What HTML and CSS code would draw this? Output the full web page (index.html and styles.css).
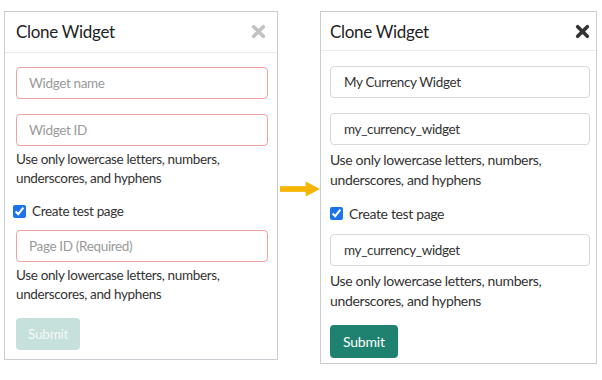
FILE: index.html
```html
<!DOCTYPE html>
<html lang="en">
<head>
  <meta charset="UTF-8">
  <meta name="viewport" content="width=device-width, initial-scale=1.0">
  <title>Clone Widget</title>
  <link rel="stylesheet" href="styles.css">
</head>
<body>

  <div class="escena">

    <!-- Antes: formulario vacío -->
    <div class="panel antes">
      <div class="cabecera">
        <span class="titulo">Clone Widget</span>
        <svg class="cerrar" viewBox="0 0 14 14"><path d="M2.5 2.5 L11.5 11.5 M11.5 2.5 L2.5 11.5"/></svg>
      </div>
      <div class="cuerpo">
        <input class="campo error" type="text" placeholder="Widget name">
        <input class="campo error" type="text" placeholder="Widget ID">
        <p class="ayuda">Use only lowercase letters, numbers, underscores, and hyphens</p>
        <label class="check"><input type="checkbox" checked> Create test page</label>
        <input class="campo error" type="text" placeholder="Page ID (Required)">
        <p class="ayuda">Use only lowercase letters, numbers, underscores, and hyphens</p>
        <button class="enviar" disabled>Submit</button>
      </div>
    </div>

    <!-- Flecha -->
    <div class="flecha">
      <svg viewBox="0 0 42 16"><rect x="0" y="5" width="28" height="6"/><polygon points="27,0 42,8 27,16"/></svg>
    </div>

    <!-- Después: formulario relleno -->
    <div class="panel despues">
      <div class="cabecera">
        <span class="titulo">Clone Widget</span>
        <svg class="cerrar" viewBox="0 0 14 14"><path d="M2.5 2.5 L11.5 11.5 M11.5 2.5 L2.5 11.5"/></svg>
      </div>
      <div class="cuerpo">
        <input class="campo" type="text" value="My Currency Widget">
        <input class="campo" type="text" value="my_currency_widget">
        <p class="ayuda">Use only lowercase letters, numbers, underscores, and hyphens</p>
        <label class="check"><input type="checkbox" checked> Create test page</label>
        <input class="campo" type="text" value="my_currency_widget">
        <p class="ayuda">Use only lowercase letters, numbers, underscores, and hyphens</p>
        <button class="enviar">Submit</button>
      </div>
    </div>

  </div>

</body>
</html>
```

FILE: styles.css
```css
/* Estilos generales */
body, html {
  margin: 0;
  padding: 0;
  background-color: #ffffff;
  font-family: Lato, "Open Sans", sans-serif;
  color: #333333;
  letter-spacing: -0.35px;
}

.escena {
  display: flex;
  align-items: flex-start;
  padding: 11px 0 0 4px;
}

/* Panel del modal */
.panel {
  box-sizing: border-box;
  border: 1px solid #c8cdd3;
  background-color: #ffffff;
}

.antes {
  width: 274px;
  height: 349px;
}

.despues {
  width: 277px;
  height: 353px;
}

.cabecera {
  display: flex;
  justify-content: space-between;
  align-items: center;
  border-bottom: 1px solid #e9ecef;
  padding: 0 11px 0 11px;
}

.antes .cabecera {
  height: 38px;
  padding-bottom: 2px;
}

.despues .cabecera {
  height: 38px;
  padding-left: 9px;
  padding-right: 6px;
}

.titulo {
  font-size: 17px;
  letter-spacing: -0.3px;
  color: #222222;
}

.cerrar {
  width: 15px;
  height: 15px;
  fill: none;
  stroke-width: 3.4;
  stroke-linecap: round;
}

.antes .cerrar {
  stroke: #c2c2c2;
}

.despues .cerrar {
  stroke: #333333;
}

.cuerpo {
  display: flex;
  flex-direction: column;
  align-items: flex-start;
  padding: 14px 9px 0 11px;
}

.despues .cuerpo {
  padding: 15px 6px 0 9px;
}

/* Campos de texto */
.campo {
  box-sizing: border-box;
  width: 100%;
  height: 32px;
  margin: 0 0 15px 0;
  padding: 0 12px;
  border: 1px solid #d6d9dc;
  border-radius: 4px;
  font-family: inherit;
  font-size: 13.5px;
  letter-spacing: -0.35px;
  color: #333333;
  outline: none;
}

.despues .campo {
  padding: 0 13px;
}

.campo.error {
  border: 1.5px solid #f4a0a0;
}

.campo::placeholder {
  color: #9a9a9a;
}

.ayuda {
  margin: -11px 0 0 0;
  font-size: 13.5px;
  line-height: 19px;
  width: 230px;
}

.despues .ayuda {
  margin-top: -10px;
  font-size: 14px;
  line-height: 20px;
  width: 240px;
}

/* Casilla */
.check {
  display: flex;
  align-items: center;
  gap: 6px;
  font-size: 13.5px;
  margin: 15px 0 11px -3px;
}

.despues .check {
  margin: 15px 0 12px 0;
  font-size: 14px;
}

.check input {
  margin: 0;
  width: 13px;
  height: 13px;
  accent-color: #1a73e8;
}

/* Botón */
.enviar {
  height: 32px;
  padding: 0 12px;
  margin-top: 14px;
  border: none;
  border-radius: 4px;
  background-color: #1f8270;
  color: #ffffff;
  font-family: inherit;
  font-size: 13.5px;
  letter-spacing: -0.2px;
}

.enviar:disabled {
  background-color: #c6e1dc;
  color: #f2f8f7;
}

.despues .enviar {
  height: 33px;
  padding: 0 13px;
  margin-top: 14px;
  font-size: 14px;
}

/* Flecha */
.flecha {
  margin: 170px 0 0 2px;
  width: 40px;
  height: 16px;
}

.flecha svg {
  display: block;
  width: 40px;
  height: 16px;
  fill: #f7b500;
}
```
